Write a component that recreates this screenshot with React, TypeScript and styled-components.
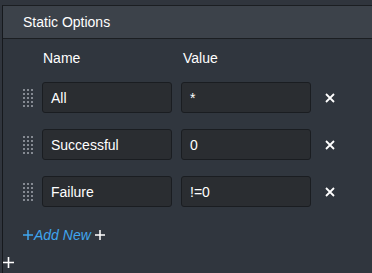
import React from 'react';
import styled, { createGlobalStyle } from 'styled-components';

const GlobalStyle = createGlobalStyle`
  html, body {
    margin: 0;
    padding: 0;
    background: #30353d;
  }
  body {
    font-family: "Liberation Sans", Arial, sans-serif;
  }
`;

const Page = styled.div`
  position: relative;
  width: 372px;
  height: 273px;
  overflow: hidden;
  background: #30353d;
  padding-top: 5px;
  padding-left: 2px;
  box-sizing: border-box;
`;

const Panel = styled.div`
  height: 100%;
  border-left: 1px solid #16191d;
  border-top: 1px solid #1b1e22;
  background: #30363e;
`;

const Header = styled.div`
  height: 32px;
  display: flex;
  align-items: center;
  padding-left: 20px;
  background: #3c424a;
  border-bottom: 1px solid #1b1e22;
  color: #ffffff;
  font-size: 14px;
`;

const Columns = styled.div`
  display: grid;
  grid-template-columns: 140px 130px;
  padding: 9px 0 0 40px;
  line-height: 20px;
  color: #ffffff;
  font-size: 14px;
`;

const Rows = styled.div`
  display: flex;
  flex-direction: column;
  gap: 16px;
  margin-top: 14px;
  padding-left: 20px;
`;

const Row = styled.div`
  display: flex;
  align-items: center;
`;

const Handle = styled.div`
  display: grid;
  grid-template-columns: repeat(3, 2px);
  grid-auto-rows: 2px;
  gap: 2px;
  width: 10px;
  margin-right: 9px;
  span {
    background: #858a92;
  }
`;

const Field = styled.div<{ $gap?: number }>`
  width: 130px;
  height: 31px;
  box-sizing: border-box;
  margin-right: ${p => p.$gap ?? 0}px;
  display: flex;
  align-items: center;
  padding-left: 8px;
  background: #2a2d31;
  border: 1px solid #1a1d21;
  border-radius: 3px;
  color: #ffffff;
  font-size: 14px;
`;

const Remove = styled.button`
  width: 10px;
  height: 10px;
  margin-left: 14px;
  padding: 0;
  border: 0;
  background: transparent;
  display: flex;
  cursor: pointer;
`;

const AddRow = styled.div`
  margin: 18px 0 0 20px;
  line-height: 20px;
  font-size: 14px;
  display: flex;
  align-items: center;
`;

const AddLink = styled.span`
  display: flex;
  align-items: center;
  gap: 1px;
  margin-right: 4px;
  color: #3fa6ef;
  font-style: italic;
`;

const Cursor = styled.svg`
  position: absolute;
  left: 3px;
  top: 257px;
`;

const Plus = ({ color }: { color: string }) => (
  <svg width="10" height="10" viewBox="0 0 10 10">
    <path d="M5 0v10M0 5h10" stroke={color} strokeWidth="1.5" />
  </svg>
);

const options = [
  { name: 'All', value: '*' },
  { name: 'Successful', value: '0' },
  { name: 'Failure', value: '!=0' },
];

export default function App() {
  return (
    <>
      <GlobalStyle />
      <Page>
        <Panel>
          <Header>Static Options</Header>
          <Columns>
            <span>Name</span>
            <span>Value</span>
          </Columns>
          <Rows>
            {options.map(o => (
              <Row key={o.name}>
                <Handle>
                  {Array.from({ length: 15 }).map((_, i) => <span key={i} />)}
                </Handle>
                <Field $gap={9}>{o.name}</Field>
                <Field>{o.value}</Field>
                <Remove aria-label="remove">
                  <svg width="10" height="10" viewBox="0 0 10 10">
                    <path d="M1 1l8 8M9 1l-8 8" stroke="#ffffff" strokeWidth="1.8" />
                  </svg>
                </Remove>
              </Row>
            ))}
          </Rows>
          <AddRow>
            <AddLink>
              <Plus color="#3fa6ef" />
              Add New
            </AddLink>
            <Plus color="#ffffff" />
          </AddRow>
        </Panel>
        <Cursor width="11" height="11" viewBox="0 0 11 11">
          <path d="M5.5 0v11M0 5.5h11" stroke="#ffffff" strokeWidth="1.6" />
        </Cursor>
      </Page>
    </>
  );
}
